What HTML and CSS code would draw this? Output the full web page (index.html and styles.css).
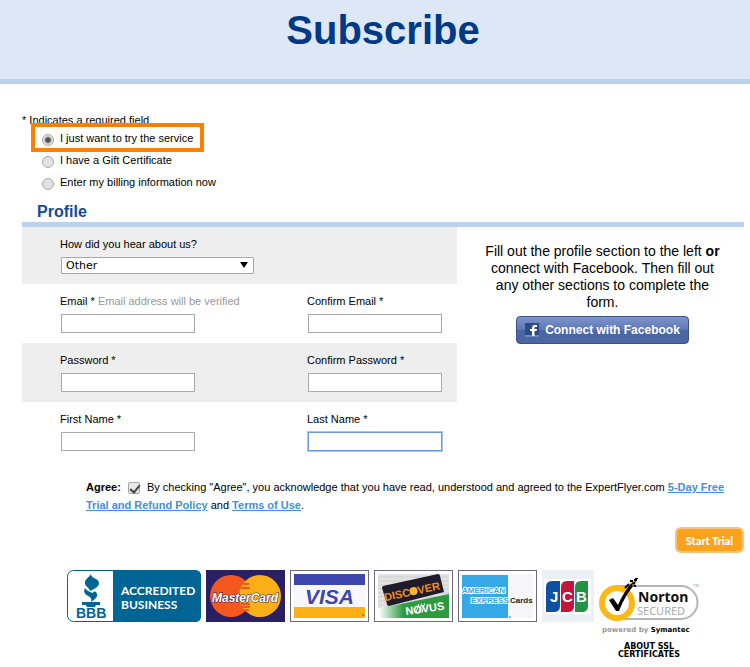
FILE: index.html
```html
<!DOCTYPE html>
<html lang="en">

<head>
    <meta charset="UTF-8">
    <meta name="viewport" content="width=device-width, initial-scale=1.0">
    <title>Subscribe - ExpertFlyer</title>
    <link rel="stylesheet" href="styles.css">
</head>

<body>
    <header class="page-header">
        <h1>Subscribe</h1>
    </header>

    <form class="content">
        <p class="required-note">* Indicates a required field</p>

        <div class="plan-options">
            <label class="plan highlighted"><input type="radio" name="plan" checked>I just want to try the service</label>
            <label class="plan"><input type="radio" name="plan">I have a Gift Certificate</label>
            <label class="plan"><input type="radio" name="plan">Enter my billing information now</label>
        </div>

        <h2>Profile</h2>

        <div class="profile">
            <div class="fields">
                <div class="row shaded short">
                    <div class="field">
                        <label for="source">How did you hear about us?</label>
                        <div class="select-box">
                            <select id="source">
                                <option>Other</option>
                            </select>
                        </div>
                    </div>
                </div>
                <div class="row">
                    <div class="field">
                        <label for="email">Email * <span class="hint">Email address will be verified</span></label>
                        <input type="text" id="email">
                    </div>
                    <div class="field">
                        <label for="confirmEmail">Confirm Email *</label>
                        <input type="text" id="confirmEmail">
                    </div>
                </div>
                <div class="row shaded">
                    <div class="field">
                        <label for="password">Password *</label>
                        <input type="password" id="password">
                    </div>
                    <div class="field">
                        <label for="confirmPassword">Confirm Password *</label>
                        <input type="password" id="confirmPassword">
                    </div>
                </div>
                <div class="row">
                    <div class="field">
                        <label for="firstName">First Name *</label>
                        <input type="text" id="firstName">
                    </div>
                    <div class="field">
                        <label for="lastName">Last Name *</label>
                        <input type="text" id="lastName" class="active">
                    </div>
                </div>
            </div>

            <div class="facebook">
                <p>Fill out the profile section to the left <b>or</b> connect with Facebook. Then fill out any other sections to complete the form.</p>
                <button type="button" class="facebook-button">
                    <svg width="14" height="14" viewBox="0 0 14 14" aria-hidden="true">
                        <rect width="14" height="14" fill="#2f4b86" />
                        <rect y="12" width="14" height="2" fill="#6f87b9" />
                        <path d="M7 13V8H5V6h2V5c0-2 1-3 3-3h2v2h-1.500q-1 0-1 1v1H12l-.400 2H9.500v5z" fill="#fff" />
                    </svg>
                    Connect with Facebook
                </button>
            </div>
        </div>

        <div class="agree">
            <label for="agree"><b>Agree:</b></label>
            <input type="checkbox" id="agree" checked>
            By checking "Agree", you acknowledge that you have read, understood and agreed to the ExpertFlyer.com <a href="#">5-Day Free Trial and Refund Policy</a> and <a href="#">Terms of Use</a>.
        </div>

        <div class="actions">
            <button type="submit" class="start-button">Start Trial</button>
        </div>
    </form>

    <footer class="logos">
        <!-- BBB -->
        <svg width="134" height="52" viewBox="0 0 134 52">
            <rect x=".500" y=".500" width="133" height="51" rx="6" fill="#fff" stroke="#006495" />
            <path d="M46 0h82q6 0 6 6v40q0 6-6 6H46z" fill="#006495" />
            <path d="M24 4C22 8 17 9 18 14c1 3 4 3 5 7 4-2 9-4 9-8 0-5-8-4-8-9z" fill="#006495" />
            <path d="M18 18c-2 4 0 6 3 8 3 1 4 3 3 6 4-3 7-5 6-8-1-3-3-3-4-1-3-1-6-2-8-5z" fill="#006495" />
            <path d="M15 32h18v3h-4l-1 2h-8l-1-2h-4z" fill="#006495" />
            <text x="9" y="48" class="bbb">BBB</text>
            <path d="M37 47h2" stroke="#006495" />
            <text x="54" y="25" class="accredited">ACCREDITED</text>
            <text x="54" y="39" class="accredited">BUSINESS</text>
        </svg>

        <!-- MasterCard -->
        <svg width="79" height="52" viewBox="0 0 79 52">
            <rect width="79" height="52" fill="#2b1f63" />
            <circle cx="25" cy="26" r="21" fill="#f4581f" />
            <circle cx="54" cy="26" r="21" fill="#fcae17" />
            <path d="M37 14h6M35 18h9M35 34h9M36 37h8M38 40h5" stroke="#f4581f" stroke-width="2" />
            <text x="6" y="32" class="mastercard">MasterCard</text>
        </svg>

        <!-- Visa -->
        <svg width="79" height="52" viewBox="0 0 79 52">
            <rect x=".500" y=".500" width="78" height="51" fill="#fff" stroke="#6b6b7c" />
            <rect x="4" y="4" width="71" height="44" fill="#f8f8fc" />
            <rect x="4" y="4" width="71" height="11" fill="#3d46ae" />
            <rect x="4" y="37" width="71" height="11" fill="#fcb017" />
            <text x="15" y="34" class="visa">VISA</text>
            <circle cx="73" cy="45" r="1" fill="#997420" />
        </svg>

        <!-- Discover / Novus -->
        <svg width="79" height="52" viewBox="0 0 79 52">
            <defs>
                <linearGradient id="novus">
                    <stop offset="0" stop-color="#fff" />
                    <stop offset=".350" stop-color="#2d9a40" />
                </linearGradient>
            </defs>
            <rect x=".500" y=".500" width="78" height="51" fill="#fff" stroke="#6b6b7c" />
            <rect x="4" y="4" width="71" height="34" fill="#e2e2e2" />
            <path d="M4 7h71M4 11h71M4 15h71M4 19h71M4 23h71M4 27h71M4 31h71M4 35h71" stroke="#cfcfcf" />
            <path d="M5 38l17-3 53-11v24H5z" fill="url(#novus)" />
            <path d="M8 18q0-1 1-2L64 4q2 0 2 2l4 16-55 14q-2 0-2-2z" fill="#1e1c2b" />
            <g transform="rotate(-12 12 31)">
                <text x="11" y="31" class="discover">DISC</text>
                <text x="45" y="31" class="discover">VER</text>
                <circle cx="41" cy="27" r="4" fill="#fdb52a" />
            </g>
            <g transform="rotate(-8 32 45)">
                <text x="32" y="45" class="novus">NOVUS</text>
                <path d="M42 45l4-9M45 45l4-9M48 45l4-9" stroke="#fff" />
            </g>
        </svg>

        <!-- American Express -->
        <svg width="79" height="52" viewBox="0 0 79 52">
            <rect x=".500" y=".500" width="78" height="51" fill="#fff" stroke="#6b6b7c" />
            <rect x="4" y="4" width="71" height="44" fill="#f7f7fa" />
            <rect x="4" y="5" width="46" height="43" fill="#35a9e6" />
            <text x="4" y="23" class="amex">AMERICAN</text>
            <text x="13" y="33" class="amex">EXPRESS</text>
            <text x="52" y="33" class="cards">Cards</text>
            <circle cx="52" cy="47" r="1" fill="#35a9e6" />
        </svg>

        <!-- JCB -->
        <svg width="52" height="52" viewBox="0 0 52 52">
            <rect width="52" height="52" fill="#eaf0f4" />
            <rect x="2" y="9" width="47" height="35" fill="#fff" />
            <path d="M4 42V17q0-6 6-6h8v25q0 6-6 6z" fill="#1050a0" />
            <path d="M19 42V17q0-6 6-6h7v25q0 6-6 6z" fill="#c5133b" />
            <path d="M33 42V17q0-6 6-6h7v25q0 6-6 6z" fill="#229344" />
            <text x="8" y="32" class="jcb">J</text>
            <text x="20" y="32" class="jcb">C</text>
            <text x="34" y="32" class="jcb">B</text>
        </svg>

        <!-- Norton -->
        <div class="norton">
            <svg width="100" height="58" viewBox="0 0 100 58">
                <path d="M18 8h64a16 16 0 0 1 0 33H18" fill="none" stroke="#b5b5b5" stroke-width="2" />
                <circle cx="18" cy="25" r="15" fill="#fff" stroke="#fdb913" stroke-width="6" />
                <path d="M10 22l4-2 5 7Q26 11 34 4l3-1-1 3Q26 17 20 33h-3z" fill="#000" />
                <path d="M26 10l4-4M29 11l5-6M31 3h3M35 2h3M36 0h3M35 8h2" stroke="#000" stroke-width="2" />
                <path d="M31 5h2M37 4h2M33 7h2" stroke="#fdb913" stroke-width="1" />
                <text x="39" y="24" class="norton-name">Norton</text>
                <text x="38" y="37" class="secured">SECURED</text>
                <text x="94" y="9" class="tm">TM</text>
                <text x="3" y="54" class="powered">powered by <tspan class="symantec">Symantec</tspan></text>
            </svg>
            <a href="#" class="ssl-link">ABOUT SSL CERTIFICATES</a>
        </div>
    </footer>
</body>

</html>
```
FILE: styles.css
```css
* {
    box-sizing: border-box;
}

body {
    margin: 0;
    background-color: #fff;
    color: #000;
    font-family: "Liberation Sans", Arial, sans-serif;
    font-size: 11px;
    line-height: 14px;
}

/* Header */
.page-header {
    height: 84px;
    padding: 7px 6px 0 22px;
    background-color: #dee7f6;
    border-bottom: 5px solid #bcd1ee;
    text-align: center;
}

h1 {
    margin: 0;
    color: #003a85;
    font-size: 40px;
    line-height: 46px;
}

.content {
    margin: 0 6px 0 22px;
    padding-top: 29px;
}

.required-note {
    margin: 0;
}

/* Plan options */
.plan-options {
    display: flex;
    flex-direction: column;
    align-items: flex-start;
    padding-left: 9px;
}

.plan {
    position: relative;
    display: flex;
    align-items: center;
    height: 22px;
    padding: 0 11px;
}

.highlighted::after {
    content: "";
    position: absolute;
    inset: -4px 0 -3px;
    border: 4px solid #ff8000;
}

input[type="radio"] {
    appearance: none;
    width: 12px;
    height: 12px;
    margin: 3px 6px 0 0;
    border: 1px solid #a8a8a8;
    border-radius: 50%;
    background-color: #e2e2e2;
}

input[type="radio"]:checked {
    background-image: radial-gradient(circle, #505050 2px, transparent 4px);
}

h2 {
    margin: 0;
    padding: 10px 15px 1px;
    border-bottom: 5px solid #bcd1ee;
    color: #0f4b9b;
    font-size: 16px;
    line-height: 18px;
}

/* Profile */
.profile {
    display: grid;
    grid-template-columns: 50fr 33fr;
}

.row {
    display: grid;
    grid-template-columns: 247px 1fr;
    height: 59px;
    padding: 10px 0 0 38px;
}

.short {
    height: 57px;
}

.shaded {
    background-color: #eee;
}

.field label {
    display: block;
    margin-bottom: 6px;
}

.hint {
    color: #999;
}

.field input {
    display: block;
    width: 134px;
    height: 19px;
    margin-left: 1px;
    border: 1px solid #a9a9a9;
    background-color: #fff;
}

.field input.active {
    border-color: #7096dc;
    box-shadow: 0 0 0 1px #a9c4f3;
}

.select-box {
    position: relative;
    width: 193px;
    margin-left: 1px;
}

.select-box select {
    appearance: none;
    display: block;
    width: 100%;
    height: 17px;
    padding: 0 4px;
    border: 1px solid #a9a9a9;
    border-radius: 1px;
    background-color: #fff;
    color: #000;
    font-family: "DejaVu Sans", Verdana, sans-serif;
    font-size: 11px;
    line-height: 15px;
}

.select-box::after {
    content: "";
    position: absolute;
    top: 5px;
    right: 6px;
    border: 4px solid transparent;
    border-top: 6px solid #000;
    border-bottom: 0;
}

/* Facebook */
.facebook {
    padding: 16px 18px 0 22px;
    text-align: center;
}

.facebook p {
    margin: 0 0 5px;
    font-size: 14px;
    line-height: 17px;
}

.facebook-button {
    display: inline-flex;
    align-items: center;
    gap: 6px;
    height: 28px;
    padding: 0 8px;
    border: 1px solid #3b5285;
    border-radius: 4px;
    background-image: linear-gradient(#8095cb, #5c75b5 50%, #4b66a5 51%, #4b66a5);
    color: #fff;
    font-family: "Liberation Sans", Arial, sans-serif;
    font-size: 12px;
    font-weight: bold;
}

/* Agreement */
.agree {
    padding: 17px 0 0 64px;
    line-height: 18px;
}

.agree a {
    color: #418fde;
    font-weight: bold;
}

input[type="checkbox"] {
    appearance: none;
    position: relative;
    width: 12px;
    height: 12px;
    margin: 0 4px;
    border: 1px solid #a8a8a8;
    border-radius: 2px;
    background-color: #e8e8e8;
    vertical-align: -3px;
}

input[type="checkbox"]:checked::after {
    content: "";
    position: absolute;
    top: 0;
    left: 3px;
    width: 4px;
    height: 8px;
    border: solid #444;
    border-width: 0 2px 2px 0;
    transform: rotate(40deg);
}

.actions {
    display: flex;
    justify-content: flex-end;
    padding-top: 13px;
}

.start-button {
    height: 26px;
    padding: 0 9px;
    border: 2px solid #f9c27b;
    border-radius: 6px;
    background-color: #fba31d;
    color: #fff;
    font-family: Lato, sans-serif;
    font-size: 11px;
    font-weight: 900;
}

/* Logos */
.logos {
    display: flex;
    align-items: flex-start;
    gap: 5px;
    padding: 17px 0 8px 67px;
}

.bbb {
    fill: #006495;
    font: bold 14px "Liberation Sans", sans-serif;
}

.accredited {
    fill: #fff;
    font: bold 12px Lato, sans-serif;
}

.mastercard {
    fill: #fff;
    stroke: #2b1f63;
    stroke-width: 1px;
    paint-order: stroke;
    font: italic bold 12px "Liberation Sans", sans-serif;
}

.visa {
    fill: #3d46ae;
    font: italic bold 21px "Liberation Sans", sans-serif;
}

.discover {
    fill: #f58a25;
    font: bold 11px "Liberation Sans", sans-serif;
}

.novus {
    fill: #fff;
    font: bold 11px "Liberation Sans", sans-serif;
}

.amex {
    fill: #35a9e6;
    stroke: #fff;
    stroke-width: 2px;
    paint-order: stroke;
    font: bold 8px "Liberation Sans", sans-serif;
}

.cards {
    fill: #222;
    font: bold 8px "Liberation Sans", sans-serif;
}

.jcb {
    fill: #fff;
    font: bold 15px "Liberation Sans", sans-serif;
}

.norton {
    display: flex;
    flex-direction: column;
    align-items: center;
    padding-top: 8px;
}

.norton-name {
    fill: #111;
    font: bold 14px "Noto Sans", sans-serif;
}

.secured {
    fill: #aaa;
    font: 11px "Noto Sans", sans-serif;
}

.tm {
    fill: #999;
    font: 4px "Noto Sans", sans-serif;
}

.powered {
    fill: #999;
    font: bold 7px "DejaVu Sans", sans-serif;
}

.symantec {
    fill: #000;
}

.ssl-link {
    width: 80px;
    margin-top: 7px;
    color: #000;
    font: bold 8px/8px "DejaVu Sans", Verdana, sans-serif;
    text-align: center;
    text-decoration: none;
}
```
